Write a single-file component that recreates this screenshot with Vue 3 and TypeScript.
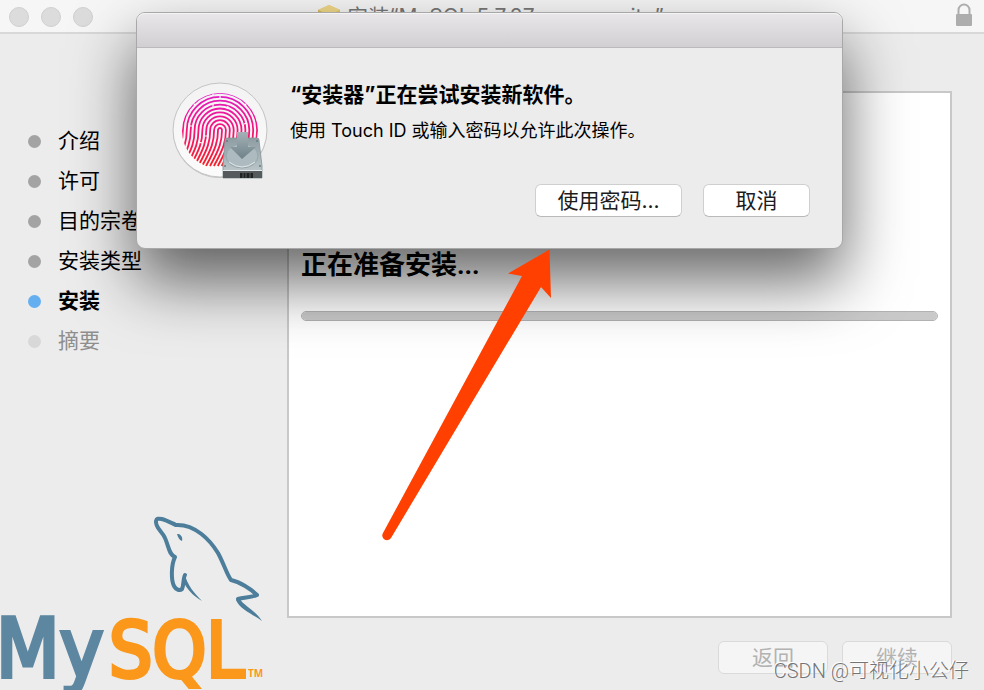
<script setup lang="ts">
interface Step {
  label: string
  state: 'done' | 'current' | 'pending'
}

const steps: Step[] = [
  { label: '介绍', state: 'done' },
  { label: '许可', state: 'done' },
  { label: '目的宗卷', state: 'done' },
  { label: '安装类型', state: 'done' },
  { label: '安装', state: 'current' },
  { label: '摘要', state: 'pending' },
]

// Fingerprint ridges: arches around the core whose legs sweep to the lower left.
const ridges: string[] = Array.from({ length: 10 }, (_, i) => 2 + i * 3.9).map((r) => {
  const leg = (x: number) => `C ${x} 11, ${x - 2} 18, ${x - 12} 36`
  return `M ${-r} 0 ${leg(-r)} M ${-r} 0 A ${r} ${r} 0 0 1 ${r} 0 ${leg(r)}`
})
</script>

<template>
  <div class="window">
    <header class="titlebar">
      <div class="lights"><i></i><i></i><i></i></div>
      <div class="title">
        <svg width="24" height="22" viewBox="0 0 24 22" aria-hidden="true">
          <path d="M1 5 12 0l11 5v12l-11 5-11-5z" fill="#e3c469" />
          <path d="M1 5 12 0l11 5-11 5z" fill="#f0d888" />
          <path d="M1 5l11 5v12L1 17z" fill="#d9b65c" />
        </svg>
        <span>安装“MySQL 5.7.27-community”</span>
      </div>
      <svg class="lock" width="16" height="24" viewBox="0 0 16 24" aria-hidden="true">
        <path d="M2.5 12V7a5.5 5.5 0 0 1 11 0v5" fill="none" stroke="#adadad" stroke-width="2" />
        <rect y="11" width="16" height="12" rx="1" fill="#adadad" />
      </svg>
    </header>

    <div class="body">
      <aside class="sidebar">
        <ol class="steps">
          <li v-for="s in steps" :key="s.label" :class="s.state">{{ s.label }}</li>
        </ol>
        <svg class="logo" width="270" height="178" viewBox="0 0 270 178" role="img" aria-label="MySQL">
          <g fill="none" stroke="#4c7d9a" stroke-linejoin="round" stroke-linecap="round">
            <path d="M176 13C169 10 157 3 156 9c-1 7 7 11 9 17 4 9 4 17 10 19-4 8-4 23-1 29 2 4 6 5 8 3 2-4 1-11 3-14" stroke-width="4" />
            <path d="M176 13c19-1 34 15 42 28 6 11 9 22 13 27 9 2 20 9 26 15-6 3-13 2-19 4" stroke-width="4" />
          </g>
          <path d="M184 61c4 13 10 20 18 28-10-6-15-12-19-20zM236 88l4-1c4 7 14 10 22 22-9-7-22-11-26-21zM177 22c4 0 6 3 5 7-3-1-4-4-5-7z" fill="#4c7d9a" />
          <text class="word blue" x="-4" y="165">My</text>
          <text class="word orange" x="109" y="165">SQL</text>
          <text class="tm" x="248" y="165">TM</text>
        </svg>
      </aside>

      <main class="content">
        <section class="panel">
          <h1>正在准备安装...</h1>
          <progress value="100" max="100" aria-label="正在准备安装"></progress>
        </section>
        <footer class="actions">
          <button class="btn wide" disabled>返回</button>
          <button class="btn wide" disabled>继续</button>
        </footer>
      </main>
    </div>

    <div class="dialog" role="dialog" aria-labelledby="dialog-title">
      <div class="dialog-bar"></div>
      <div class="dialog-main">
        <svg class="touch" width="98" height="100" viewBox="0 0 98 100" aria-hidden="true">
          <defs>
            <linearGradient id="ink" gradientUnits="userSpaceOnUse" x1="0" y1="-36" x2="0" y2="38">
              <stop offset="0" stop-color="#e01cc4" />
              <stop offset=".45" stop-color="#f5147f" />
              <stop offset="1" stop-color="#f52222" />
            </linearGradient>
            <linearGradient id="disc" x1="0" y1="0" x2="0" y2="1">
              <stop offset="0" stop-color="#f3f3f3" />
              <stop offset="1" stop-color="#fbfbfb" />
            </linearGradient>
            <linearGradient id="metal" x1="0" y1="0" x2="0" y2="1">
              <stop offset="0" stop-color="#8e9da2" />
              <stop offset="1" stop-color="#c3ced1" />
            </linearGradient>
            <linearGradient id="down" x1="0" y1="0" x2="0" y2="1">
              <stop offset="0" stop-color="#a4b2b7" />
              <stop offset="1" stop-color="#6f8288" />
            </linearGradient>
            <clipPath id="print"><circle cx="0" cy="1" r="38" /></clipPath>
          </defs>
          <circle cx="49" cy="50" r="47" fill="#aaa" opacity=".6" />
          <circle cx="49" cy="49" r="47" fill="url(#disc)" stroke="#c4c4c4" />
          <g transform="translate(49 49)" clip-path="url(#print)" fill="none">
            <path v-for="d in ridges" :key="d" :d="d" stroke="url(#ink)" stroke-width="1.8" />
            <path
              d="M-7-38v3M0-34v3M-27-27l3 3M27-27l-3 3M-7-26v3M8-24l-1 3M-31-4h4M-15 6h4M24-6l3-1M-22 12l4 1"
              stroke="#f8f8f8" stroke-width="1.2"
            />
          </g>
          <path d="M54 59q0-2 2-2h30q2 0 2 2l3 26v12H52V85z" fill="url(#metal)" stroke="#84949a" stroke-width=".8" />
          <ellipse cx="71" cy="75" rx="16" ry="12" fill="#adbbc0" stroke="#91a1a6" stroke-width=".8" />
          <path d="M58 81q13 10 26 0" fill="none" stroke="#e1e8ea" stroke-width="1" />
          <path d="M66 51h11v15h8L71 78 59 66h7z" fill="url(#down)" />
          <path d="M52 90h39v7H52z" fill="#555a5c" />
          <path d="M52 89h39v1H52z" fill="#e5eaeb" />
          <path d="M69 92h13v5H69z" fill="#1f2223" />
          <path d="M72 92v5M75 92v5M79 92v5" stroke="#777" stroke-width=".7" />
          <g fill="#6c7b80"><circle cx="56" cy="60" r="1" /><circle cx="86" cy="60" r="1" /><circle cx="54" cy="85" r="1" /><circle cx="89" cy="85" r="1" /></g>
        </svg>
        <div class="message">
          <h2 id="dialog-title">“安装器”正在尝试安装新软件。</h2>
          <p>使用 Touch ID 或输入密码以允许此次操作。</p>
          <div class="choices">
            <button class="btn password">使用密码...</button>
            <button class="btn cancel">取消</button>
          </div>
        </div>
      </div>
    </div>

    <svg class="pointer" width="172" height="294" viewBox="0 0 172 294" aria-hidden="true">
      <path d="M169.500 .5 128 24.500l14 2.500L3 284a4.700 4.700 0 0 0 8 5L161 38l10 11z" fill="#ff4000" />
    </svg>
    <div class="watermark">CSDN @可视化小公仔</div>
  </div>
</template>

<style>
body {
  margin: 0;
}
</style>

<style scoped>
.window {
  position: relative;
  display: flex;
  flex-direction: column;
  box-sizing: border-box;
  height: 100vh;
  overflow: hidden;
  background: #ececec;
  color: #000;
  font-family: Inter, "Noto Sans CJK SC", sans-serif;
  font-size: 21px;
  line-height: 30px;
}
.titlebar {
  display: grid;
  grid-template-columns: 1fr auto 1fr;
  flex: none;
  box-sizing: border-box;
  height: 34px;
  padding: 0 12px 0 9px;
  background: #f6f6f6;
  border-bottom: 2px solid #d8d8d8;
}
.lights {
  display: flex;
  align-items: center;
  gap: 12px;
}
.lights i {
  box-sizing: border-box;
  width: 20px;
  height: 20px;
  border: 1px solid #d0d0d0;
  border-radius: 50%;
  background: #dcdcdc;
}
.title {
  display: flex;
  align-items: flex-start;
  gap: 6px;
  color: #777;
  font-size: 21px;
  line-height: 34px;
  white-space: nowrap;
}
.title svg {
  margin-top: 5px;
}
.lock {
  justify-self: end;
  margin-top: 3px;
}
.body {
  display: grid;
  grid-template-columns: 287px 1fr;
  flex: 1;
  min-height: 0;
}
.sidebar {
  display: flex;
  flex-direction: column;
  justify-content: space-between;
  min-height: 0;
}
.steps {
  margin: 0;
  padding: 87px 0 0 28px;
  list-style: none;
}
.steps li {
  display: flex;
  align-items: center;
  gap: 17px;
  height: 40px;
}
.steps li::before {
  content: "";
  width: 13px;
  height: 13px;
  border-radius: 50%;
  background: #a3a3a3;
}
.steps .current {
  font-weight: 700;
}
.steps .current::before {
  background: #65aef0;
}
.steps .pending {
  color: #8e8e8e;
}
.steps .pending::before {
  background: #d8d8d8;
}
.logo {
  flex: none;
}
.word {
  font-family: "DejaVu Sans Condensed", "Open Sans", sans-serif;
  stroke-width: 4px;
}
.blue {
  fill: #5d87a1;
  stroke: #5d87a1;
  font-size: 82px;
}
.orange {
  fill: #fb981b;
  stroke: #fb981b;
  font-size: 76px;
}
.tm {
  fill: #fb981b;
  font-family: "Open Sans", sans-serif;
  font-size: 10px;
  font-weight: 700;
}
.content {
  display: flex;
  flex-direction: column;
  padding: 57px 32px 16px 0;
}
.panel {
  flex: 1;
  padding: 152px 12px 0;
  border: 2px solid #c8c8c8;
  background: #fff;
}
h1 {
  margin: 0;
  font-family: Roboto, "Noto Sans CJK SC", sans-serif;
  font-size: 26px;
  line-height: 40px;
}
progress {
  display: block;
  box-sizing: border-box;
  width: 100%;
  height: 10px;
  margin-top: 26px;
  overflow: hidden;
  appearance: none;
  border: 1px solid #b2b2b2;
  border-radius: 5px;
  background: #c9c9c9;
}
progress::-webkit-progress-bar {
  background: #c9c9c9;
}
progress::-webkit-progress-value {
  background: #c9c9c9;
}
.actions {
  display: flex;
  justify-content: flex-end;
  gap: 14px;
  padding-top: 23px;
}
.btn {
  box-sizing: border-box;
  height: 33px;
  padding: 0;
  border: 1px solid #cfcfcf;
  border-bottom-color: #b9b9b9;
  border-radius: 6px;
  background: #fff;
  color: #1c1c1c;
  font: inherit;
  line-height: 28px;
}
.btn:disabled {
  border-color: #dadada;
  background: #f5f5f5;
  color: #b2b2b2;
}
.wide {
  width: 110px;
}
.dialog {
  position: absolute;
  top: 12px;
  right: 141px;
  left: 136px;
  border: 1px solid #a8a8a8;
  border-radius: 9px;
  background: #ececec;
  box-shadow: 0 32px 64px rgba(0, 0, 0, 0.6);
}
.dialog-bar {
  height: 33px;
  border-top: 1px solid #f4f4f4;
  border-bottom: 1px solid #bcb9bc;
  border-radius: 8px 8px 0 0;
  background: linear-gradient(#e8e6e8, #d1cfd1);
}
.dialog-main {
  display: flex;
  gap: 21px;
  padding: 32px 32px 31px 34px;
}
.touch {
  flex: none;
  margin-top: 1px;
}
.message {
  flex: 1;
}
h2 {
  margin: 0;
  font-size: 21px;
  line-height: 30px;
}
p {
  margin: 8px 0 0;
  font-size: 18px;
  line-height: 26px;
}
.choices {
  display: flex;
  justify-content: flex-end;
  gap: 21px;
  margin-top: 40px;
}
.password {
  width: 147px;
}
.cancel {
  width: 107px;
}
.pointer {
  position: absolute;
  top: 249px;
  left: 380px;
}
.watermark {
  position: absolute;
  right: 15px;
  bottom: 4px;
  color: #757575;
  font-family: Roboto, "Noto Sans CJK SC", sans-serif;
  font-size: 20px;
  font-weight: 300;
  text-shadow: -1px -1px 0 #fff;
}
</style>
